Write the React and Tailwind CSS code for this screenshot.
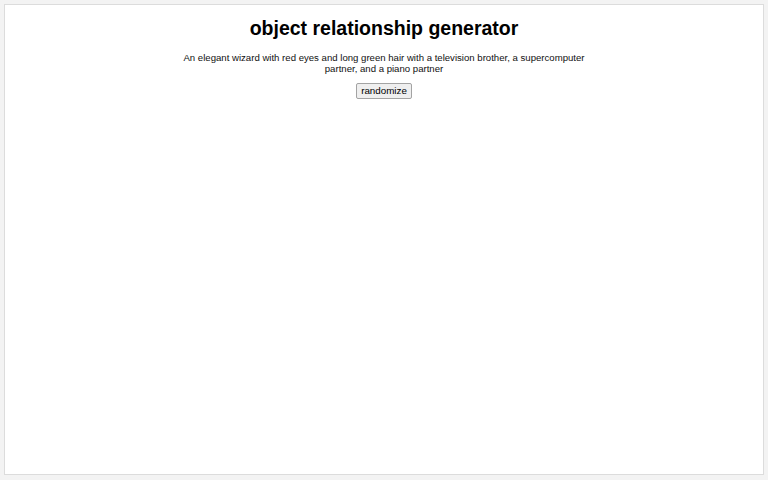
const App = () => {
  return (
    <div className="h-screen bg-[#f3f3f3] p-[4px] pb-[5px] font-['Liberation_Sans',Arial,sans-serif] text-black">
      {/* Main sheet */}
      <div className="h-full bg-white border border-[#dcdcdc] flex flex-col items-center">
        <h1 className="mt-[11px] text-[19.5px] font-bold leading-[24px]">
          object relationship generator
        </h1>
        <p className="mt-[12px] w-[420px] text-center text-[9.6px] leading-[11px] text-[#111]">
          An elegant wizard with red eyes and long green hair with a television
          brother, a supercomputer partner, and a piano partner
        </p>
        <button className="mt-[9px] px-[4px] h-[16px] text-[9.8px] leading-[14px] bg-[#efefef] border border-[#a3a3a3] rounded-[2px]">
          randomize
        </button>
      </div>
    </div>
  );
};

export default App;
